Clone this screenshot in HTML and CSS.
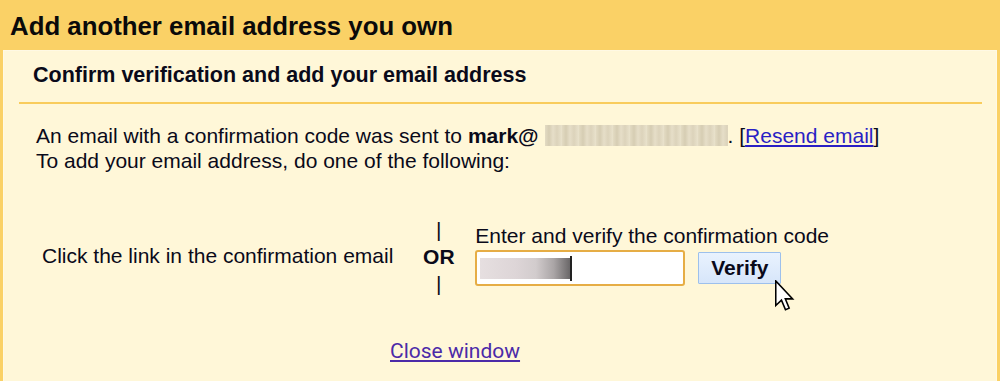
FILE: index.html
```html
<!DOCTYPE html>
<html>
<head>
<meta charset="utf-8">
<link rel="stylesheet" href="styles.css">
</head>
<body>
<div class="dialog">
  <h1 class="title">Add another email address you own</h1>
  <div class="panel">
    <h2 class="subtitle">Confirm verification and add your email address</h2>
    <div class="rule"></div>
    <div class="content">
      <p class="line">An email with a confirmation code was sent to <b>mark@</b><span class="blur-email"></span>. [<a class="link" href="#">Resend email</a>]</p>
      <p class="line">To add your email address, do one of the following:</p>
      <div class="options">
        <div class="opt-link">Click the link in the confirmation email</div>
        <div class="or"><span>|</span><span class="or-word">OR</span><span>|</span></div>
        <div class="opt-code">
          <div class="label">Enter and verify the confirmation code</div>
          <div class="code-row">
            <div class="code-input"><span class="code-blur"></span><span class="caret"></span></div>
            <button class="verify">Verify</button>
          </div>
        </div>
      </div>
      <div class="close"><a class="close-link" href="#">Close window</a></div>
    </div>
  </div>
</div>
<svg class="pointer" width="20" height="31" viewBox="0 0 13 20">
  <path d="M0.5,0.5 L0.5,16.5 L4.2,13 L6.8,19.2 L9.2,18.2 L6.7,12.2 L11.5,12.2 Z" fill="#fff" stroke="#000" stroke-width="1" stroke-linejoin="miter"/>
</svg>
</body>
</html>
```

FILE: styles.css
```css
html, body {
  margin: 0;
  padding: 0;
}
body {
  background: #fad166;
  font-family: "Liberation Sans", Arial, sans-serif;
  color: #000;
  width: 1000px;
  height: 381px;
  overflow: hidden;
}
.dialog {
  display: flex;
  flex-direction: column;
}
.title {
  margin: 0;
  height: 48px;
  padding: 2px 0 0 10px;
  font-size: 25.8px;
  line-height: 48px;
  font-weight: bold;
  color: #0a0a0a;
}
.panel {
  margin: 0 3px;
  background: #fff7d8;
  height: 340px;
  box-shadow: inset 0 0 0 1px #fff9e4;
}
.subtitle {
  margin: 0;
  padding: 13px 0 0 30px;
  font-size: 21.5px;
  line-height: 25px;
  font-weight: bold;
  color: #0a0a1a;
}
.rule {
  margin: 14px 15px 0 16px;
  height: 2px;
  background: #f9cc5c;
}
.content {
  padding: 19px 0 0 33px;
  font-size: 21px;
  line-height: 25px;
  color: #0a0a1a;
}
.line {
  margin: 0;
}
.blur-email {
  display: inline-block;
  width: 183px;
  height: 21px;
  margin-left: 6px;
  vertical-align: -3px;
  background: repeating-linear-gradient(90deg, #e3dbc3 0px, #d6cdb3 4px, #e6dec8 8px, #dcd3bb 12px, #e9e2cc 17px);
}
.link {
  color: #2a1fc4;
  text-decoration: underline;
}
.options {
  display: flex;
  align-items: flex-start;
  margin-top: 43px;
}
.opt-link {
  padding: 27px 0 0 6px;
  margin-right: 30px;
  white-space: nowrap;
}
.or {
  display: flex;
  flex-direction: column;
  align-items: center;
  width: 31px;
  line-height: 27px;
  margin-right: 21px;
}
.or-word {
  font-weight: bold;
}
.opt-code {
  display: flex;
  flex-direction: column;
  padding-top: 7px;
}
.label {
  white-space: nowrap;
}
.code-row {
  display: flex;
  align-items: center;
  margin-top: 2px;
}
.code-input {
  box-sizing: border-box;
  width: 210px;
  height: 36px;
  border: 2px solid #e6ad45;
  border-radius: 3px;
  background: #fff;
  display: flex;
  align-items: center;
  padding-left: 3px;
}
.code-blur {
  display: block;
  width: 90px;
  height: 21px;
  background: linear-gradient(90deg, #e6dfe0 0%, #ddd5d7 40%, #d2cccd 62%, #aaa5a6 82%, #6a6768 100%);
}
.caret {
  display: block;
  width: 2px;
  height: 25px;
  background: #222;
}
.verify {
  margin-left: 13px;
  box-sizing: border-box;
  width: 83px;
  height: 32px;
  border: 1px solid #9dc0ec;
  border-radius: 1px;
  background: linear-gradient(#e9f2fe, #d7e6fa);
  font-family: "Liberation Sans", Arial, sans-serif;
  font-size: 21px;
  font-weight: bold;
  color: #0a0a1a;
  padding: 0;
}
.close {
  margin-top: 42px;
  padding-left: 354px;
  font-family: Roboto, "Liberation Sans", sans-serif;
  font-size: 21px;
  line-height: 25px;
}
.close-link {
  color: #4b2aa8;
  text-decoration: underline;
}
.pointer {
  position: absolute;
  left: 775px;
  top: 280px;
}
```
